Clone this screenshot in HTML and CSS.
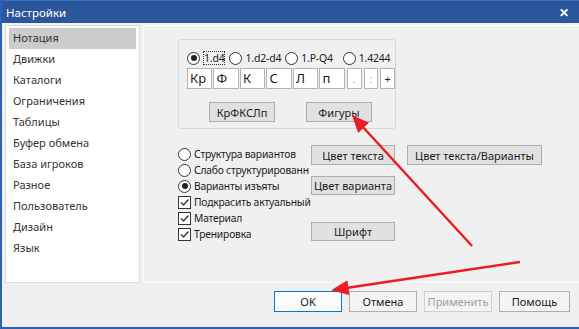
FILE: index.html
```html
<!DOCTYPE html>
<html>

<head>
    <title>Настройки</title>
    <link rel="stylesheet" href="styles.css">
</head>

<body>

    <div class="window">
        <div class="titlebar">
            <span class="title">Настройки</span>
            <span class="close">✕</span>
        </div>

        <div class="content">
            <ul class="sidebar">
                <li class="selected">Нотация</li>
                <li>Движки</li>
                <li>Каталоги</li>
                <li>Ограничения</li>
                <li>Таблицы</li>
                <li>Буфер обмена</li>
                <li>База игроков</li>
                <li>Разное</li>
                <li>Пользователь</li>
                <li>Дизайн</li>
                <li>Язык</li>
            </ul>

            <div class="main">
                <div class="group">
                    <div class="radio-row">
                        <label class="opt"><span class="radio checked"></span><span class="focus">1.d4</span></label>
                        <label class="opt"><span class="radio"></span>1.d2-d4</label>
                        <label class="opt"><span class="radio"></span>1.P-Q4</label>
                        <label class="opt gap"><span class="radio"></span>1.4244</label>
                    </div>
                    <div class="boxes">
                        <span class="box">Кр</span>
                        <span class="box">Ф</span>
                        <span class="box">К</span>
                        <span class="box">С</span>
                        <span class="box">Л</span>
                        <span class="box">п</span>
                        <span class="box small dim">.</span>
                        <span class="box small dim">:</span>
                        <span class="box small">+</span>
                    </div>
                    <div class="group-buttons">
                        <button class="btn">КрФКСЛп</button>
                        <button class="btn">Фигуры</button>
                    </div>
                </div>

                <div class="lower">
                    <div class="options">
                        <label class="opt"><span class="radio"></span>Структура вариантов</label>
                        <label class="opt"><span class="radio"></span>Слабо структурированн</label>
                        <label class="opt"><span class="radio checked"></span>Варианты изъяты</label>
                        <label class="opt"><span class="check"></span>Подкрасить актуальный</label>
                        <label class="opt"><span class="check"></span>Материал</label>
                        <label class="opt"><span class="check"></span>Тренировка</label>
                    </div>
                    <div class="btn-col">
                        <button class="btn wide first">Цвет текста</button>
                        <button class="btn wide second">Цвет варианта</button>
                        <button class="btn wide third">Шрифт</button>
                    </div>
                    <div class="btn-col">
                        <button class="btn wider first">Цвет текста/Варианты</button>
                    </div>
                </div>
            </div>
        </div>

        <div class="footer">
            <button class="dlg-btn default">OK</button>
            <button class="dlg-btn">Отмена</button>
            <button class="dlg-btn disabled">Применить</button>
            <button class="dlg-btn">Помощь</button>
        </div>

        <svg class="arrows" width="579" height="329">
            <defs>
                <marker id="head" markerWidth="7" markerHeight="6" refX="1" refY="3" orient="auto" markerUnits="strokeWidth">
                    <path d="M0,0 L7,3 L0,6 Z" fill="#ec1c24"></path>
                </marker>
            </defs>
            <line x1="472" y1="246" x2="362" y2="126" stroke="#ec1c24" stroke-width="2.5" marker-end="url(#head)"></line>
            <line x1="520" y1="262" x2="346" y2="288" stroke="#ec1c24" stroke-width="2.5" marker-end="url(#head)"></line>
        </svg>
    </div>

</body>

</html>
```

FILE: styles.css
```css
body {
    margin: 0;
    background-color: #f0f0f0;
    font-family: "Noto Sans", Arial, sans-serif;
    font-size: 11px;
    color: #1a1a1a;
}

.window {
    position: relative;
    width: 577px;
    height: 327px;
    border-left: 2px solid #2b62b8;
    border-bottom: 2px solid #2b62b8;
    background-color: #f0f0f0;
    overflow: hidden;
}

.titlebar {
    display: flex;
    align-items: center;
    justify-content: space-between;
    height: 23px;
    padding: 0 10px 0 4px;
    background-color: #2b579a;
    border-top: 1px solid #3a6cc0;
    box-sizing: border-box;
    color: #fff;
}

.title {
    font-size: 11.5px;
}

.close {
    font-size: 12px;
    font-weight: bold;
}

.content {
    display: flex;
    padding: 2px 0 0 3px;
}

.sidebar {
    list-style: none;
    margin: 0;
    padding: 2px 3px;
    width: 127px;
    height: 252px;
    background-color: #fff;
    border: 1px solid #dcdcdc;
}

.sidebar li {
    height: 21px;
    line-height: 20px;
    padding-left: 4px;
    color: #333;
}

.sidebar li.selected {
    background-color: #cccccc;
}

.main {
    flex: 1;
    height: 256px;
    margin-left: 3px;
    border: 1px solid #fbfbfb;
    border-right: none;
}

.group {
    width: 216px;
    height: 88px;
    margin: 13px 0 0 34px;
    border: 1px solid #d9d9d9;
    border-radius: 3px;
}

.radio-row {
    display: flex;
    align-items: center;
    height: 16px;
    margin: 10px 0 0 8px;
    font-size: 10.5px;
    letter-spacing: -0.2px;
}

.opt {
    display: flex;
    align-items: center;
    height: 16px;
    white-space: nowrap;
}

.radio-row .opt {
    margin-right: 4px;
}

.radio-row .opt.gap {
    margin-left: 6px;
}

.radio {
    display: inline-block;
    position: relative;
    flex-shrink: 0;
    width: 11px;
    height: 11px;
    margin-right: 3px;
    border: 1px solid #333;
    border-radius: 50%;
    background-color: #fff;
}

.radio.checked::after {
    content: "";
    position: absolute;
    left: 2.5px;
    top: 2.5px;
    width: 6px;
    height: 6px;
    border-radius: 50%;
    background-color: #222;
}

.focus {
    padding: 0 1px;
    outline: 1px dotted #333;
    outline-offset: -1px;
}

.check {
    display: inline-block;
    flex-shrink: 0;
    width: 11px;
    height: 11px;
    margin-right: 3px;
    border: 1px solid #333;
    background: #fff url("data:image/svg+xml;utf8,<svg xmlns='http://www.w3.org/2000/svg' width='11' height='11'><path d='M2 5.5 L4.5 8 L9.5 2.5' fill='none' stroke='%23222' stroke-width='1.2'/></svg>") no-repeat;
}

.boxes {
    display: flex;
    gap: 1px;
    margin: 2px 0 0 8px;
}

.box {
    width: 22px;
    height: 19px;
    line-height: 19px;
    padding-left: 2px;
    border: 1px solid #b4b4b4;
    background-color: #fff;
    font-size: 13px;
}

.box.small {
    width: 13px;
    text-align: center;
    padding: 0;
    margin-left: 1px;
    font-size: 11px;
}

.box.dim {
    color: #aaa;
}

.group-buttons {
    display: flex;
    gap: 31px;
    margin: 13px 0 0 30px;
}

.btn {
    width: 66px;
    height: 20px;
    padding: 0;
    border: 1px solid #adadad;
    background-color: #e1e1e1;
    font-family: "Noto Sans", Arial, sans-serif;
    font-size: 11px;
    color: #1a1a1a;
}

.lower {
    display: flex;
    margin: 17px 0 0 34px;
}

.options {
    display: flex;
    flex-direction: column;
    width: 133px;
    font-size: 10.3px;
    letter-spacing: -0.2px;
}

.btn-col {
    display: flex;
    flex-direction: column;
}

.btn.wide {
    width: 84px;
}

.btn.wider {
    width: 135px;
    margin-left: 12px;
}

.btn.first {
    margin-top: -1px;
}

.btn.second {
    margin-top: 11px;
    height: 19px;
}

.btn.third {
    margin-top: 27px;
    height: 19px;
}

.footer {
    display: flex;
    gap: 7px;
    padding: 8px 0 0 272px;
}

.dlg-btn {
    width: 68px;
    height: 21px;
    padding: 0;
    border: 1px solid #adadad;
    background-color: #f4f4f4;
    font-family: "Noto Sans", Arial, sans-serif;
    font-size: 11px;
    color: #1a1a1a;
}

.dlg-btn.default {
    border-color: #0078d7;
    background-color: #fbfbfb;
}

.dlg-btn.disabled {
    color: #a0a0a0;
    border-color: #cfcfcf;
}

.dlg-btn:last-child {
    width: 71px;
}

.arrows {
    position: absolute;
    left: -2px;
    top: 0;
    pointer-events: none;
}
```
